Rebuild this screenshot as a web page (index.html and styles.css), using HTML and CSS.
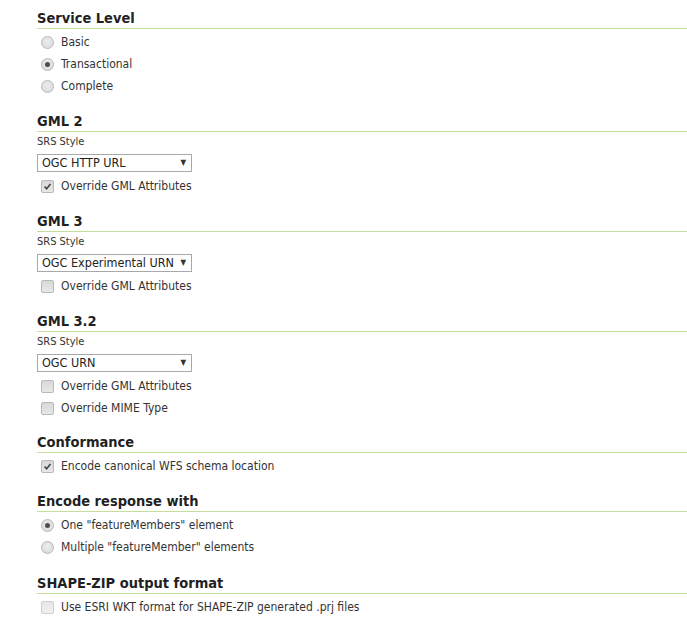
FILE: index.html
```html
<!DOCTYPE html>
<html>
<head>
<meta charset="utf-8">
<link rel="stylesheet" href="styles.css">
</head>
<body>
<div class="page">
  <section class="sec">
    <h3 class="head">Service Level</h3>
    <ul class="opts">
      <li class="row"><span class="radio"></span><span class="lbl">Basic</span></li>
      <li class="row"><span class="radio on"></span><span class="lbl">Transactional</span></li>
      <li class="row"><span class="radio"></span><span class="lbl">Complete</span></li>
    </ul>
  </section>

  <section class="sec">
    <h3 class="head">GML 2</h3>
    <div class="opts">
      <div class="small">SRS Style</div>
      <div class="select"><span>OGC HTTP URL</span><span class="arrow">▼</span></div>
      <div class="row first"><span class="check on"><svg viewBox="0 0 13 13"><path d="M3 6.6 L5.4 9.2 L10 3.6" /></svg></span><span class="lbl">Override GML Attributes</span></div>
    </div>
  </section>

  <section class="sec">
    <h3 class="head">GML 3</h3>
    <div class="opts">
      <div class="small">SRS Style</div>
      <div class="select"><span>OGC Experimental URN</span><span class="arrow">▼</span></div>
      <div class="row first"><span class="check"></span><span class="lbl">Override GML Attributes</span></div>
    </div>
  </section>

  <section class="sec tight">
    <h3 class="head">GML 3.2</h3>
    <div class="opts">
      <div class="small">SRS Style</div>
      <div class="select"><span>OGC URN</span><span class="arrow">▼</span></div>
      <div class="row first"><span class="check"></span><span class="lbl">Override GML Attributes</span></div>
      <div class="row"><span class="check"></span><span class="lbl">Override MIME Type</span></div>
    </div>
  </section>

  <section class="sec">
    <h3 class="head">Conformance</h3>
    <div class="opts">
      <div class="row"><span class="check on"><svg viewBox="0 0 13 13"><path d="M3 6.6 L5.4 9.2 L10 3.6" /></svg></span><span class="lbl">Encode canonical WFS schema location</span></div>
    </div>
  </section>

  <section class="sec loose">
    <h3 class="head">Encode response with</h3>
    <ul class="opts">
      <li class="row"><span class="radio on"></span><span class="lbl">One "featureMembers" element</span></li>
      <li class="row"><span class="radio"></span><span class="lbl">Multiple "featureMember" elements</span></li>
    </ul>
  </section>

  <section class="sec">
    <h3 class="head">SHAPE-ZIP output format</h3>
    <div class="opts">
      <div class="row"><span class="check disabled"></span><span class="lbl">Use ESRI WKT format for SHAPE-ZIP generated .prj files</span></div>
    </div>
  </section>
</div>
</body>
</html>
```

FILE: styles.css
```css
html, body {
  margin: 0;
  padding: 0;
  background: #ffffff;
}

body {
  font-family: "DejaVu Sans Condensed", "DejaVu Sans", sans-serif;
  font-stretch: condensed;
  font-size: 12px;
  color: #333333;
}

.page {
  padding: 8px 0 0 37px;
}

.sec {
  margin-bottom: 14px;
}

.sec.tight {
  margin-bottom: 13px;
}

.sec.loose {
  margin-bottom: 15px;
}

.head {
  margin: 0;
  height: 20px;
  line-height: 20px;
  font-size: 14.5px;
  font-weight: bold;
  color: #1f1f24;
  border-bottom: 1px solid #c4df9b;
}

.opts {
  list-style: none;
  margin: 0;
  padding: 2px 0 0 0;
}

.row {
  display: flex;
  align-items: center;
  height: 22px;
  padding-left: 4px;
}

.row.first {
  margin-top: 3px;
}

.lbl {
  margin-left: 7px;
  line-height: 16px;
  white-space: nowrap;
}

.radio {
  box-sizing: border-box;
  width: 13px;
  height: 13px;
  border-radius: 50%;
  border: 1px solid #b8b8b8;
  background: radial-gradient(circle at 50% 40%, #ececec 0%, #d8d8d8 100%);
  display: flex;
  align-items: center;
  justify-content: center;
  flex: none;
}

.radio.on::after {
  content: "";
  width: 5px;
  height: 5px;
  border-radius: 50%;
  background: #4d4d4d;
}

.check {
  box-sizing: border-box;
  width: 13px;
  height: 13px;
  border-radius: 2px;
  border: 1px solid #b8b8b8;
  background: linear-gradient(#d8d8d8, #e8e8e8);
  flex: none;
  display: flex;
}

.check svg {
  width: 11px;
  height: 11px;
}

.check path {
  fill: none;
  stroke: #3f3f3f;
  stroke-width: 1.8;
}

.check.disabled {
  border-color: #d0d0d0;
  background: linear-gradient(#e6e6e6, #f0f0f0);
}

.small {
  font-size: 11px;
  line-height: 16px;
  color: #333333;
}

.select {
  box-sizing: border-box;
  margin-top: 4px;
  width: 155px;
  height: 18px;
  border: 1px solid #a9a9a9;
  display: flex;
  align-items: center;
  justify-content: space-between;
  padding: 0 5px 0 4px;
  color: #222222;
  font-size: 12.5px;
  line-height: 16px;
}

.arrow {
  font-size: 8px;
  color: #333333;
}
```
